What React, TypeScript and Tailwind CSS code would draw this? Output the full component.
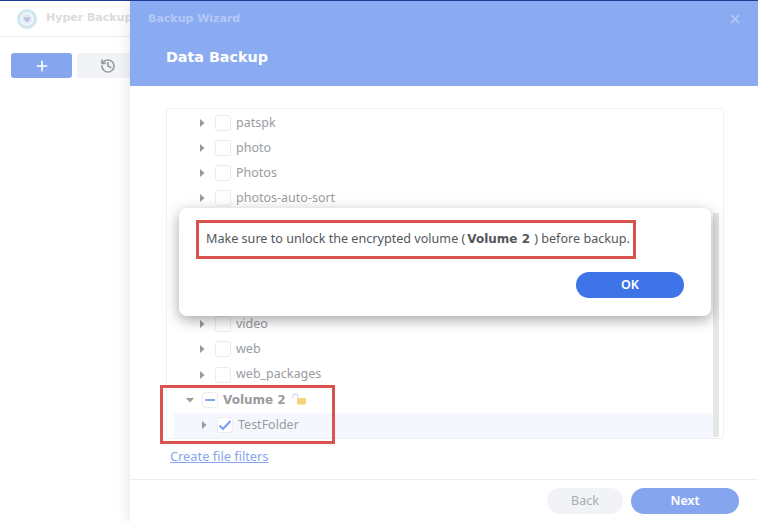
import { History, X, Plus } from 'lucide-react';

const topFolders = ['patspk', 'photo', 'Photos', 'photos-auto-sort'];
const bottomFolders = ['video', 'web', 'web_packages'];

function Arrow({ down = false }: { down?: boolean }) {
  return (
    <svg width="8" height="8" viewBox="0 0 8 8" className="shrink-0">
      {down ? <path d="M0 2h8L4 6.5z" fill="#9a9a9a" /> : <path d="M2 0v8l4.5-4z" fill="#9a9a9a" />}
    </svg>
  );
}

function Checkbox({ state }: { state?: 'mixed' | 'checked' }) {
  return (
    <span className="w-[16px] h-[16px] shrink-0 rounded-[3px] border border-[#ececec] bg-white flex items-center justify-center">
      {state === 'mixed' && <span className="w-[10px] h-[2px] bg-[#85a6ef]" />}
      {state === 'checked' && (
        <svg width="14" height="12" viewBox="0 0 14 12">
          <path d="M1.5 6.5l3.500 3.500L12.500 2" fill="none" stroke="#7f9fec" strokeWidth="2.2" />
        </svg>
      )}
    </span>
  );
}

function FolderRow({ name }: { name: string }) {
  return (
    <div className="h-[25.15px] shrink-0 flex items-center pl-[24px]">
      <Arrow />
      <span className="ml-[9px]"><Checkbox /></span>
      <span className="ml-[5px] text-[12.5px] text-[#999c9f]">{name}</span>
    </div>
  );
}

export default function App() {
  return (
    <div className="relative w-[758px] h-[522px] overflow-hidden bg-white font-['Noto_Sans',sans-serif] border-t border-[#1f3a93]">
      {/* App behind the wizard */}
      <div className="h-[36px] flex items-center pl-[17px] border-b border-[#eeeeee]">
        <svg width="20" height="20" viewBox="0 0 20 20" className="shrink-0">
          <circle cx="10" cy="10" r="8.500" fill="#eef4f8" stroke="#cfe6f0" strokeWidth="3" />
          <circle cx="10" cy="10" r="5" fill="#dfeaf2" />
          <path d="M7 8.500c1.500-.8 2.500-.4 3 .5.5-.9 1.500-1.300 3-.5 0 2.500-1.500 4-3 4.500-1.500-.5-3-2-3-4.500z" fill="#c3bde2" />
        </svg>
        <span className="ml-[9px] text-[11px] font-bold text-[#d9dcde] font-['DejaVu_Sans',sans-serif]">Hyper Backup</span>
      </div>
      <div className="flex gap-[5px] pl-[11px] pt-[16px]">
        <button className="w-[61px] h-[25px] rounded-[3px] bg-[#85a6ef] flex items-center justify-center">
          <Plus size={16} strokeWidth={2.4} color="#fff" />
        </button>
        <button className="w-[61px] h-[25px] rounded-[3px] bg-[#f1f3f6] flex items-center justify-center">
          <History size={16} strokeWidth={2.6} color="#9a9da0" />
        </button>
      </div>

      {/* Wizard window */}
      <div className="absolute left-[130px] top-0 right-0 bottom-0 bg-white flex flex-col shadow-[0_0_14px_rgba(0,0,0,0.12)]">
        <div className="h-[85px] shrink-0 bg-[#8aabf1] relative">
          <div className="pl-[18px] pt-[11px] text-[11px] leading-[14px] font-bold text-[#b4c8f5] font-['DejaVu_Sans',sans-serif]">Backup Wizard</div>
          <div className="pl-[36px] pt-[21px] text-[14.3px] leading-[20px] font-bold text-white font-['DejaVu_Sans',sans-serif]">Data Backup</div>
          <X size={14} strokeWidth={3} color="#b4c8f5" className="absolute right-[16px] top-[11px]" />
        </div>
        <div className="flex-1 px-[36px] pt-[22px]">
          <div className="relative h-[331px] w-[558px] rounded-[3px] border border-[#f1f1f1] pt-[1.5px] pl-[7px] overflow-hidden">
            {topFolders.map(f => <FolderRow key={f} name={f} />)}
            {/* rows under the alert dialog */}
            <div className="h-[100.6px]" />
            {bottomFolders.map(f => <FolderRow key={f} name={f} />)}
            <div className="h-[25px] mt-[0.5px] flex items-center pl-[12px]">
              <Arrow down />
              <span className="ml-[8px]"><Checkbox state="mixed" /></span>
              <span className="ml-[5px] text-[12px] font-bold text-[#999c9f] font-['DejaVu_Sans',sans-serif]">Volume 2</span>
              <svg width="16" height="13" viewBox="0 0 16 13" className="ml-[5px] -mt-[1px]">
                <path d="M2 5V3.500a2.500 2.500 0 0 1 5 0V5" fill="none" stroke="#d5dde8" strokeWidth="1.300" />
                <rect x="6" y="5" width="9" height="6.500" rx="1" fill="#f6d27a" />
              </svg>
            </div>
            <div className="h-[25px] w-[539px] flex items-center pl-[26px] bg-[#f4f7fd]">
              <Arrow />
              <span className="ml-[9px]"><Checkbox state="checked" /></span>
              <span className="ml-[5px] text-[12.5px] text-[#999c9f]">TestFolder</span>
            </div>
            <div className="absolute left-[546px] top-[104px] bottom-[1px] w-[6px] bg-[#e6e6e6]" />
          </div>
          <div className="mt-[9px] ml-[4px] text-[12.8px] leading-[17px] text-[#85a6ef] underline">Create file filters</div>
        </div>
        <div className="h-[43px] shrink-0 border-t border-[#eeeeee] flex justify-end gap-[8px] pr-[19px] pt-[8px]">
          <button className="w-[76px] h-[26px] rounded-full bg-[#f1f3f6] text-[12.5px] text-[#a9acaf]">Back</button>
          <button className="w-[108px] h-[26px] rounded-full bg-[#85a6ef] text-[12.5px] font-semibold text-white">Next</button>
        </div>
      </div>

      {/* Alert dialog */}
      <div className="absolute left-[179px] top-[207px] w-[532px] h-[108px] rounded-[8px] bg-white shadow-[0_4px_14px_rgba(0,0,0,0.35)] px-[27px] pt-[22px]">
        <p className="text-[12.6px] leading-[18px] text-[#53575c] whitespace-nowrap">
          Make sure to unlock the encrypted volume (<b className="ml-[2px] font-['DejaVu_Sans',sans-serif] text-[12px]">Volume 2 </b>) before backup.
        </p>
        <div className="flex justify-end mt-[24px]">
          <button className="w-[108px] h-[26px] rounded-full bg-[#3f73e8] text-[12.5px] font-semibold text-white">OK</button>
        </div>
      </div>

      {/* Annotation frames */}
      <div className="absolute left-[196px] top-[219px] w-[440px] h-[39px] border-[3px] border-[#d9534f]" />
      <div className="absolute left-[160px] top-[384px] w-[175px] h-[59px] border-[3px] border-[#d9534f]" />
    </div>
  );
}
